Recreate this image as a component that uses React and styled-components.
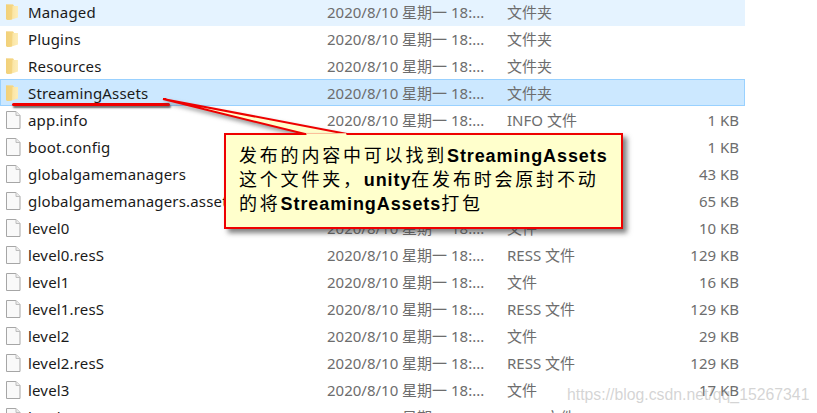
import React from "react";
import styled, { createGlobalStyle } from "styled-components";

const GlobalStyle = createGlobalStyle`
  html, body { margin: 0; padding: 0; background: #fff; }
  body { width: 817px; height: 413px; overflow: hidden; }
`;

const Page = styled.div`
  position: relative;
  width: 817px;
  height: 413px;
  overflow: hidden;
  font-family: "Noto Sans", "Noto Sans CJK SC", sans-serif;
`;

const List = styled.div`
  display: flex;
  flex-direction: column;
  width: 745px;
  margin-top: -2px;
`;

const Row = styled.div`
  display: grid;
  grid-template-columns: 28px 299px 180px 150px 82px;
  align-items: center;
  height: 27px;
  font-size: 15px;
  background: ${p => (p.$selected ? "#cce8ff" : p.$hover ? "#e5f3ff" : "transparent")};
  box-shadow: ${p => (p.$selected ? "inset 0 0 0 1px #99d1ff" : p.$hover ? "0 1px 0 #e5f3ff" : "none")};
`;

const IconCell = styled.div`
  display: flex;
  padding-left: ${p => (p.$folder ? "5px" : "6px")};
`;

const Name = styled.span`
  color: #1a1a1a;
  letter-spacing: 0.17px;
  white-space: nowrap;
`;

const Meta = styled.span`
  color: #6d6d6d;
  white-space: nowrap;
`;

const Size = styled(Meta)`
  text-align: right;
`;

const Underline = styled.div`
  position: absolute;
  left: 12px;
  top: 103px;
  width: 158px;
  height: 3px;
  background: #f00000;
  border-radius: 2px;
  box-shadow: 1px 2px 2px rgba(40, 40, 40, 0.7);
`;

const Pointer = styled.svg`
  position: absolute;
  left: 160px;
  top: 95px;
  overflow: visible;
  filter: ${p => (p.$shadow ? "drop-shadow(2px 3px 2px rgba(70, 70, 70, 0.55))" : "none")};
`;

const Callout = styled.div`
  position: absolute;
  left: 224px;
  top: 133px;
  width: 399px;
  height: 96px;
  box-sizing: border-box;
  padding: 7px 0 0 13px;
  background: #ffffcc;
  border: 2px solid #ee0000;
  box-shadow: 4px 4px 5px rgba(60, 60, 60, 0.65);
  color: #000;
  font-family: "Noto Sans CJK SC", sans-serif;
  font-size: 18px;
  font-weight: 400;
  letter-spacing: 2.8px;
`;

const Latin = styled.b`
  font-family: "Liberation Sans", sans-serif;
  font-weight: 700;
  letter-spacing: 0.9px;
`;

const Line = styled.div`
  height: 24px;
  line-height: 24px;
  white-space: nowrap;
`;

const Watermark = styled.div`
  position: absolute;
  left: 567px;
  top: 386px;
  color: rgba(170, 170, 170, 0.5);
  font-family: "Liberation Sans", sans-serif;
  font-size: 15.8px;
  white-space: nowrap;
`;

const FolderIcon = () => (
  <svg width="14" height="18" viewBox="0 0 14 18">
    <defs>
      <linearGradient id="fold" x1="0" y1="0" x2="1" y2="0">
        <stop offset="0" stopColor="#f3d27c" />
        <stop offset="0.5" stopColor="#fbe5a3" />
        <stop offset="1" stopColor="#fdedb9" />
      </linearGradient>
    </defs>
    <path d="M1 1.5h7l1 1.5h4v11.5L5 17H2.5L1 16z" fill="url(#fold)" />
    <path d="M1 1.5h7L9 3H7.5L7 16.5 2.5 17 1 16z" fill="#f2d078" opacity="0.75" />
  </svg>
);

const FileIcon = () => (
  <svg width="15" height="18" viewBox="0 0 15 18">
    <path d="M.5 .5h9.5l4 4v13H.5z" fill="#f9f9f9" stroke="#a6a6a6" />
    <path d="M10 .5v4h4" fill="#ececec" stroke="#bdbdbd" />
  </svg>
);

const DATE = "2020/8/10 星期一 18:...";

const files = [
  { name: "Managed", type: "文件夹", folder: true, hover: true },
  { name: "Plugins", type: "文件夹", folder: true },
  { name: "Resources", type: "文件夹", folder: true },
  { name: "StreamingAssets", type: "文件夹", folder: true, selected: true },
  { name: "app.info", type: "INFO 文件", size: "1 KB" },
  { name: "boot.config", type: "CONFIG 文件", size: "1 KB" },
  { name: "globalgamemanagers", type: "文件", size: "43 KB" },
  { name: "globalgamemanagers.assets", type: "ASSETS 文件", size: "65 KB" },
  { name: "level0", type: "文件", size: "10 KB" },
  { name: "level0.resS", type: "RESS 文件", size: "129 KB" },
  { name: "level1", type: "文件", size: "16 KB" },
  { name: "level1.resS", type: "RESS 文件", size: "129 KB" },
  { name: "level2", type: "文件", size: "29 KB" },
  { name: "level2.resS", type: "RESS 文件", size: "129 KB" },
  { name: "level3", type: "文件", size: "17 KB" },
  { name: "level3.resS", type: "RESS 文件", size: "129 KB" },
];

export default function App() {
  return (
    <Page>
      <GlobalStyle />
      <List>
        {files.map(f => (
          <Row key={f.name} $selected={f.selected} $hover={f.hover}>
            <IconCell $folder={f.folder}>{f.folder ? <FolderIcon /> : <FileIcon />}</IconCell>
            <Name>{f.name}</Name>
            <Meta>{DATE}</Meta>
            <Meta>{f.type}</Meta>
            <Size>{f.size}</Size>
          </Row>
        ))}
      </List>
      <Underline />
      <Pointer $shadow width="190" height="42" viewBox="0 0 190 42">
        <path d="M3 4 L145 39 L187 39 Z" fill="#ffffcc" stroke="#ee0000" strokeWidth="2" />
      </Pointer>
      <Callout>
        <Line>发布的内容中可以找到<Latin>StreamingAssets</Latin></Line>
        <Line>这个文件夹，<Latin>unity</Latin>在发布时会原封不动</Line>
        <Line>的将<Latin>StreamingAssets</Latin>打包</Line>
      </Callout>
      {/* covers the callout's top border where the pointer joins it */}
      <Pointer width="190" height="42" viewBox="0 0 190 42">
        <path d="M146 38.2 L186 38.2 L187 41 L147 41 Z" fill="#ffffcc" />
      </Pointer>
      <Watermark>https://blog.csdn.net/qq_15267341</Watermark>
    </Page>
  );
}
